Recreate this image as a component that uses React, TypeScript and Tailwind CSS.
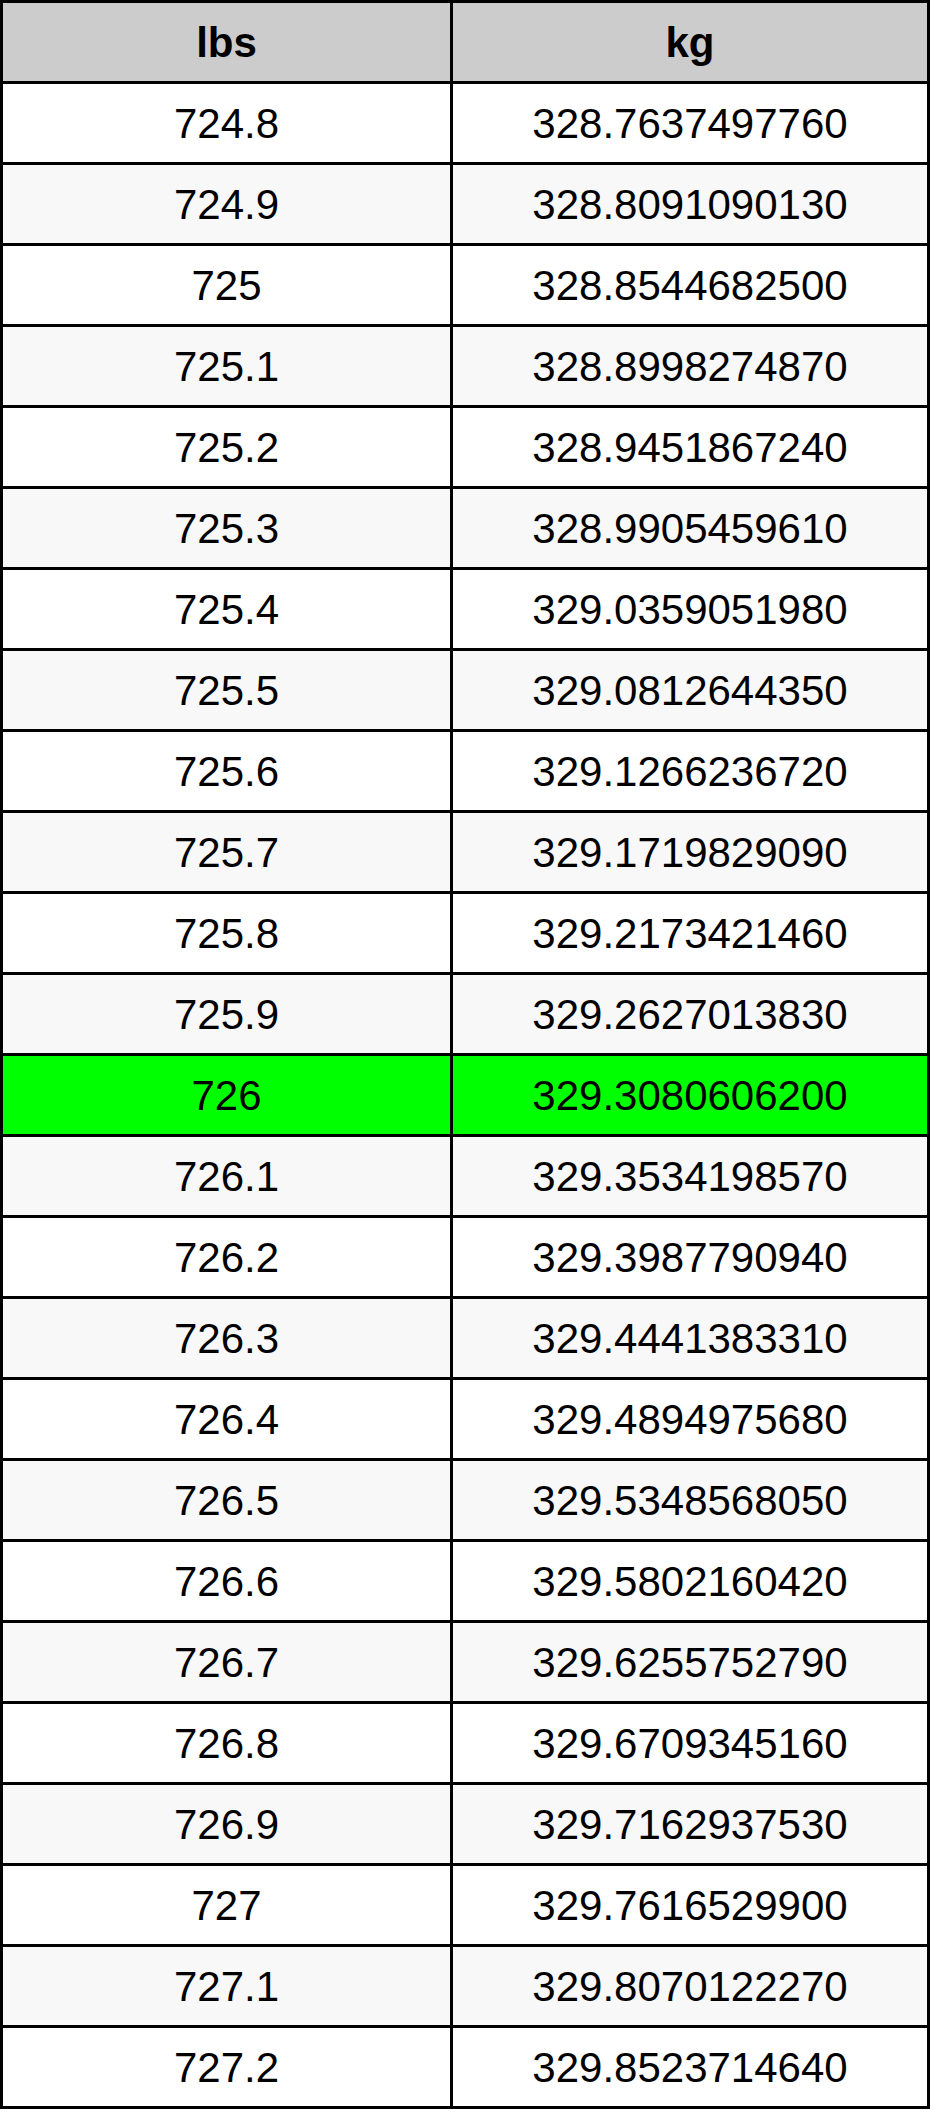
const rows: [string, string][] = [
  ['724.8', '328.7637497760'],
  ['724.9', '328.8091090130'],
  ['725', '328.8544682500'],
  ['725.1', '328.8998274870'],
  ['725.2', '328.9451867240'],
  ['725.3', '328.9905459610'],
  ['725.4', '329.0359051980'],
  ['725.5', '329.0812644350'],
  ['725.6', '329.1266236720'],
  ['725.7', '329.1719829090'],
  ['725.8', '329.2173421460'],
  ['725.9', '329.2627013830'],
  ['726', '329.3080606200'],
  ['726.1', '329.3534198570'],
  ['726.2', '329.3987790940'],
  ['726.3', '329.4441383310'],
  ['726.4', '329.4894975680'],
  ['726.5', '329.5348568050'],
  ['726.6', '329.5802160420'],
  ['726.7', '329.6255752790'],
  ['726.8', '329.6709345160'],
  ['726.9', '329.7162937530'],
  ['727', '329.7616529900'],
  ['727.1', '329.8070122270'],
  ['727.2', '329.8523714640'],
];

export default function App() {
  return (
    <div className="min-h-[2115px] bg-white" style={{ fontFamily: '"Liberation Sans", Arial, sans-serif' }}>
      <div className="w-[930px] bg-black p-[3px] grid grid-cols-[447px_474px] gap-[3px] text-black text-[42px]">
        <div className="h-[78px] bg-[#cccccc] flex items-center justify-center font-bold">lbs</div>
        <div className="h-[78px] bg-[#cccccc] flex items-center justify-center font-bold">kg</div>
        {rows.map(([lbs, kg], i) => {
          const bg = lbs === '726' ? 'bg-[#00ff00]' : i % 2 === 0 ? 'bg-white' : 'bg-[#f8f8f8]';
          return [
            <div key={lbs + 'a'} className={`h-[78px] ${bg} flex items-center justify-center`}>{lbs}</div>,
            <div key={lbs + 'b'} className={`h-[78px] ${bg} flex items-center justify-center`}>{kg}</div>,
          ];
        })}
      </div>
    </div>
  );
}
